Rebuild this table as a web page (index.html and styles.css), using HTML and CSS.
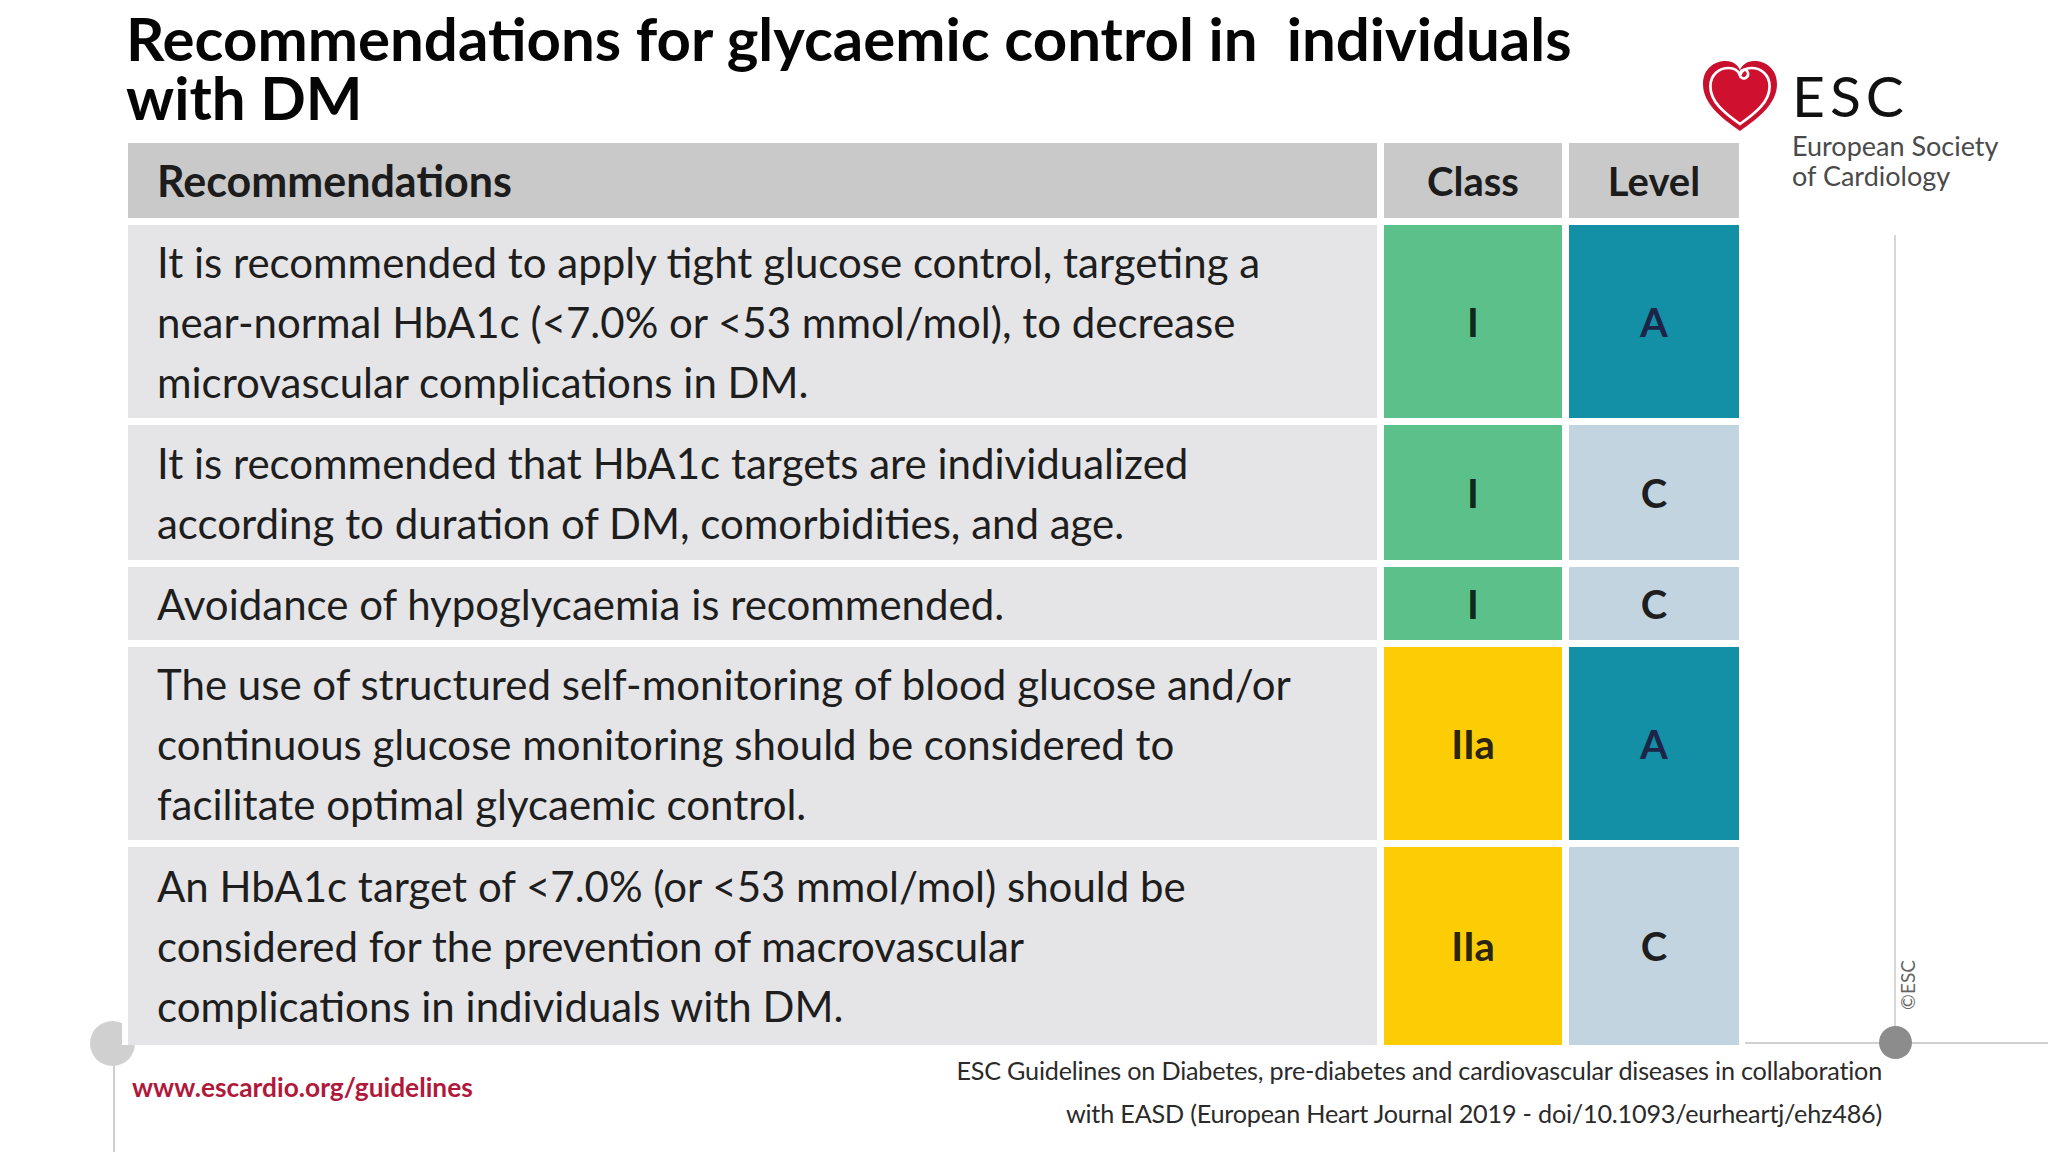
FILE: index.html
```html
<!DOCTYPE html>
<html lang="en">
<head>
<meta charset="utf-8">
<title>Recommendations for glycaemic control in individuals with DM</title>
<link rel="stylesheet" href="styles.css">
</head>
<body>
<div class="slide">
  <h1 class="title"><span class="title-line">Recommendations for glycaemic control in &nbsp;individuals</span><span class="title-line">with DM</span></h1>

  <div class="logo">
    <svg class="heart" viewBox="0 0 80 76" width="80" height="76" aria-hidden="true">
      <path d="M40 73 C20 59 3 45 3 26 C3 11 14 3 26 3 C33 3 38 7 40 12 C42 7 47 3 54 3 C66 3 77 11 77 26 C77 45 60 59 40 73 Z" fill="#c8102e"/>
      <path transform="translate(40 38) scale(0.8) translate(-40 -38)" d="M40 73 C20 59 3 45 3 26 C3 11 14 3 26 3 C33 3 38 7 40 12 C42 7 47 3 54 3 C66 3 77 11 77 26 C77 45 60 59 40 73 Z" fill="#d0102f" stroke="#fff" stroke-width="3.4"/>
      <path d="M40 17 C40 11 47 10 48 15 C49 20 43 22 41 19" fill="none" stroke="#fff" stroke-width="2.6" stroke-linecap="round"/>
    </svg>
    <div class="logo-text">
      <div class="logo-esc">ESC</div>
      <div class="logo-sub">European Society<br>of Cardiology</div>
    </div>
  </div>

  <span class="deco-left-dot"></span>
  <span class="deco-left-line"></span>
  <span class="deco-right-line"></span>
  <span class="deco-right-hline"></span>
  <span class="deco-right-dot"></span>
  <span class="copyright">©ESC</span>

  <div class="recs">
    <div class="cell head rec-head">Recommendations</div>
    <div class="cell head center">Class</div>
    <div class="cell head center">Level</div>

    <div class="cell rec">It is recommended to apply tight glucose control, targeting a<br>near-normal HbA1c (&lt;7.0% or &lt;53 mmol/mol), to decrease<br>microvascular complications in DM.</div>
    <div class="cell grade class-i">I</div>
    <div class="cell grade level-a">A</div>

    <div class="cell rec">It is recommended that HbA1c targets are individualized<br>according to duration of DM, comorbidities, and age.</div>
    <div class="cell grade class-i">I</div>
    <div class="cell grade level-c">C</div>

    <div class="cell rec">Avoidance of hypoglycaemia is recommended.</div>
    <div class="cell grade class-i">I</div>
    <div class="cell grade level-c">C</div>

    <div class="cell rec">The use of structured self-monitoring of blood glucose and/or<br>continuous glucose monitoring should be considered to<br>facilitate optimal glycaemic control.</div>
    <div class="cell grade class-iia">IIa</div>
    <div class="cell grade level-a">A</div>

    <div class="cell rec">An HbA1c target of &lt;7.0% (or &lt;53 mmol/mol) should be<br>considered for the prevention of macrovascular<br>complications in individuals with DM.</div>
    <div class="cell grade class-iia">IIa</div>
    <div class="cell grade level-c">C</div>
  </div>

  <div class="footer">
    <div class="url">www.escardio.org/guidelines</div>
    <div class="cite">ESC Guidelines on Diabetes, pre-diabetes and cardiovascular diseases in collaboration<br>with EASD (European Heart Journal 2019 - doi/10.1093/eurheartj/ehz486)</div>
  </div>
</div>
</body>
</html>
```

FILE: styles.css
```css
* { box-sizing: border-box; }

html, body {
  margin: 0;
  padding: 0;
  background: #ffffff;
}

.slide {
  position: relative;
  width: 2048px;
  height: 1152px;
  overflow: hidden;
  background: #ffffff;
  font-family: Lato, "Open Sans", "Liberation Sans", sans-serif;
  color: #1e1e1e;
}

.title {
  width: fit-content;
  margin: 0;
  padding: 9px 0 0 126px;
  font-size: 60px;
  font-weight: 700;
  line-height: 59px;
  color: #050505;
  white-space: nowrap;
}
.title-line {
  display: block;
  height: 59px;
}

/* logo */
.logo {
  position: absolute;
  left: 1700px;
  top: 58px;
  display: flex;
  gap: 12px;
  align-items: flex-start;
}
.heart { display: block; flex: none; }
.logo-text { padding-top: 9px; }
.logo-esc {
  font-size: 57px;
  line-height: 56px;
  font-weight: 400;
  letter-spacing: 5px;
  color: #111;
}
.logo-sub {
  margin-top: 8px;
  font-size: 27px;
  line-height: 30px;
  color: #4a4a4a;
}

/* table */
.recs {
  display: grid;
  grid-template-columns: 1249px 178px 170px;
  grid-template-rows: 75px 193px 135px 73px 193px 198px;
  column-gap: 7px;
  row-gap: 7px;
  margin: 16px 0 0 128px;
  width: 1611px;
  position: relative;
  z-index: 2;
  box-shadow: -6px 0 0 0 #ffffff;
}

.cell {
  display: flex;
  align-items: center;
}
.head {
  background: #c9c9ca;
  font-size: 42px;
  font-weight: 700;
  color: #1c1c1c;
}
.rec-head { padding-left: 29px; font-size: 43px; }
.center { justify-content: center; font-size: 40px; }

.rec {
  background: #e5e5e7;
  padding-left: 29px;
  font-size: 42px;
  line-height: 60px;
  color: #1e1e1e;
}

.grade {
  justify-content: center;
  font-size: 40px;
  font-weight: 700;
}
.class-i { background: #5cc08b; color: #0f2a1b; }
.class-iia { background: #fccd05; color: #2a2410; }
.level-a { background: #1390a6; color: #1c2448; }
.level-c { background: #c1d4df; color: #1e1e1e; }

/* footer */
.footer {
  display: flex;
  justify-content: space-between;
  align-items: flex-start;
  width: 1750px;
  margin: 4px 0 0 132px;
}
.url {
  margin-top: 17px;
  font-size: 26.3px;
  line-height: 43px;
  font-weight: 700;
  color: #b0193c;
}
.cite {
  text-align: right;
  font-size: 25.2px;
  line-height: 43px;
  color: #2a2a2a;
  letter-spacing: -0.2px;
}

/* decorations */
.deco-left-dot {
  position: absolute;
  left: 90px;
  top: 1021px;
  width: 45px;
  height: 45px;
  border-radius: 50%;
  background: #d0d0d0;
  z-index: 1;
}
.deco-left-line {
  position: absolute;
  left: 113px;
  top: 1050px;
  width: 2px;
  height: 102px;
  background: #cfcfcf;
}
.deco-right-line {
  position: absolute;
  left: 1894px;
  top: 235px;
  width: 2px;
  height: 806px;
  background: #d6d6d6;
}
.deco-right-hline {
  position: absolute;
  left: 1745px;
  top: 1042px;
  width: 303px;
  height: 2px;
  background: #d0d0d0;
}
.deco-right-dot {
  position: absolute;
  left: 1879px;
  top: 1026px;
  width: 33px;
  height: 33px;
  border-radius: 50%;
  background: #8c8c8c;
}
.copyright {
  position: absolute;
  left: 1877px;
  top: 974px;
  width: 62px;
  font-size: 19px;
  line-height: 22px;
  text-align: center;
  color: #666;
  transform: rotate(-90deg);
}
```
